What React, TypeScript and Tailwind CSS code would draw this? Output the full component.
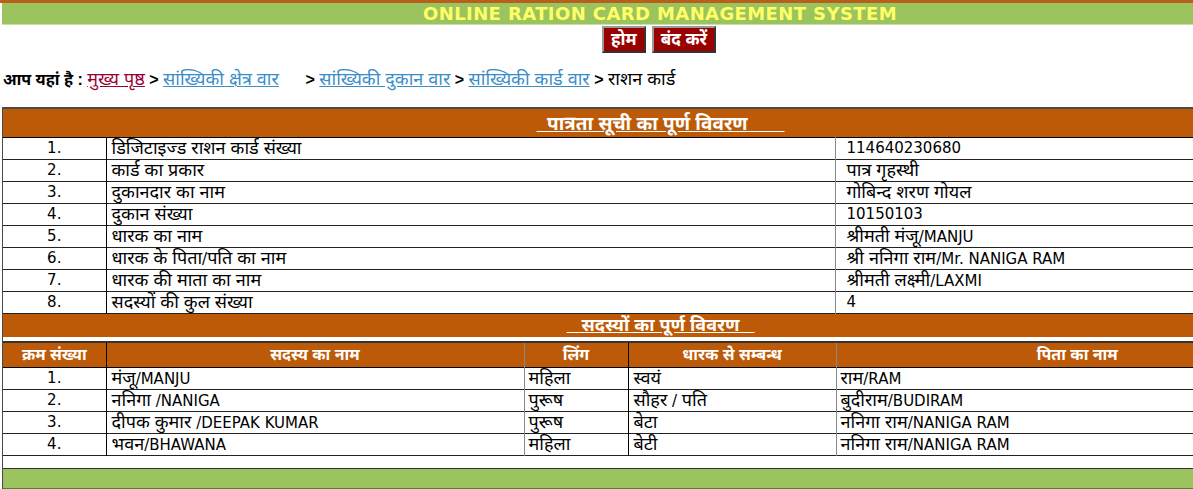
import React from 'react';

const details = [
  ['1.', 'डिजिटाइज्ड राशन कार्ड संख्या', '114640230680'],
  ['2.', 'कार्ड का प्रकार', 'पात्र गृहस्थी'],
  ['3.', 'दुकानदार का नाम', 'गोबिन्द शरण गोयल'],
  ['4.', 'दुकान संख्या', '10150103'],
  ['5.', 'धारक का नाम', 'श्रीमती मंजू/MANJU'],
  ['6.', 'धारक के पिता/पति का नाम', 'श्री ननिगा राम/Mr. NANIGA RAM'],
  ['7.', 'धारक की माता का नाम', 'श्रीमती लक्ष्मी/LAXMI'],
  ['8.', 'सदस्यों की कुल संख्या', '4'],
];

const members = [
  ['1.', 'मंजू/MANJU', 'महिला', 'स्वयं', 'राम/RAM'],
  ['2.', 'ननिगा /NANIGA', 'पुरूष', 'सौहर / पति', 'बुदीराम/BUDIRAM'],
  ['3.', 'दीपक कुमार /DEEPAK KUMAR', 'पुरूष', 'बेटा', 'ननिगा राम/NANIGA RAM'],
  ['4.', 'भवन/BHAWANA', 'महिला', 'बेटी', 'ननिगा राम/NANIGA RAM'],
];

const font = "font-['Liberation_Sans','Noto_Sans',sans-serif]";
const cellFont = "font-['DejaVu_Sans','Noto_Sans',sans-serif]";

// devanagari runs get a bigger size so they look like the Mangal text of the original
const deva = /([\u0900-\u097F](?:[\u0900-\u097F\s]*[\u0900-\u097F])?)/g;
function Mixed({ text }: { text: string }) {
  return (
    <>
      {text.split(deva).map((part, i) =>
        i % 2 === 1 ? (
          <span key={i} className={`text-[18px] leading-[16px] ${font}`}>{part}</span>
        ) : (
          <React.Fragment key={i}>{part}</React.Fragment>
        )
      )}
    </>
  );
}

const btn =
  'h-[27px] px-[7px] bg-[#990000] text-white font-bold text-[17px] border-2 border-t-[#9a9a9a] border-l-[#9a9a9a] border-r-[#333] border-b-[#333] leading-none';

export default function App() {
  return (
    <div className={`w-[1193px] h-[489px] overflow-hidden bg-white text-black ${font}`}>
      <div className="w-[1318px]">
        {/* header */}
        <div className="h-[3px] bg-[#b85f1c]" />
        <div className="ml-[2px] h-[22px] bg-[#9bc35e] border-b border-[#c9dfa8] flex items-center justify-center">
          <span className="text-[18px] leading-none font-bold text-[#ffff66] font-['DejaVu_Sans',sans-serif] tracking-[0.4px]">
            ONLINE RATION CARD MANAGEMENT SYSTEM
          </span>
        </div>
        <div className="flex justify-center gap-[6px] pt-[1px]">
          <button className={btn}>होम</button>
          <button className={btn}>बंद करें</button>
        </div>

        {/* breadcrumb */}
        <div className="pl-[3px] pt-[14px] h-[54px] text-[16px] leading-[24px] whitespace-pre">
          <b>आप यहां है : </b>
          <a href="#" className="text-[#990033] underline text-[18px]">मुख्य पृष्ठ</a>
          <b> &gt; </b>
          <a href="#" className="text-[#3b8dc8] underline text-[18px]">सांख्यिकी क्षेत्र वार</a>
          <b>{'\u00a0\u00a0\u00a0\u00a0\u00a0 > '}</b>
          <a href="#" className="text-[#3b8dc8] underline text-[18px]">सांख्यिकी दुकान वार</a>
          <b> &gt; </b>
          <a href="#" className="text-[#3b8dc8] underline text-[18px]">सांख्यिकी कार्ड वार</a>
          <b> &gt; </b>
          <span className="text-[18px]">राशन कार्ड</span>
        </div>

        {/* details */}
        <div className="ml-[2px] border-t-2 border-l border-[#4a4a4a]">
          <table className={`w-full border-collapse text-[15px] leading-[16px] ${cellFont}`}>
            <tbody>
              <tr className="bg-[#bd5a07] h-[28px] border-b border-black">
                <td colSpan={3} className={`text-center text-white font-bold text-[19px] pt-[2px] ${font}`}>
                  <span className="underline whitespace-pre">{'\u00a0 पात्रता सूची का पूर्ण विवरण \u00a0\u00a0\u00a0\u00a0\u00a0\u00a0'}</span>
                </td>
              </tr>
              {details.map((r) => (
                <tr key={r[0]} className="h-[22px] border-b border-[#222]">
                  <td className="w-[103px] text-center border-r border-black">{r[0]}</td>
                  <td className="w-[729px] pl-[5px] border-r border-[#888]"><Mixed text={r[1]} /></td>
                  <td className="pl-[11px]"><Mixed text={r[2]} /></td>
                </tr>
              ))}
              <tr className="bg-[#bd5a07] h-[24px]">
                <td colSpan={3} className={`text-center text-white font-bold text-[18px] ${font}`}>
                  <span className="underline whitespace-pre">{'\u00a0\u00a0 सदस्यों का पूर्ण विवरण \u00a0\u00a0'}</span>
                </td>
              </tr>
            </tbody>
          </table>

          {/* members */}
          <div className="mt-[4px] border-t-2 border-[#333]">
            <table className={`w-full border-collapse text-[15px] leading-[16px] ${cellFont}`}>
              <thead>
                <tr className={`bg-[#bd5a07] h-[24px] text-white font-bold text-[16px] border-b border-black ${font}`}>
                  <th className="w-[103px] border-r border-black">क्रम संख्या</th>
                  <th className="w-[418px] border-r border-[#888]">सदस्य का नाम</th>
                  <th className="w-[104px] border-r border-black">लिंग</th>
                  <th className="w-[208px] border-r border-[#888]">धारक से सम्बन्ध</th>
                  <th>पिता का नाम</th>
                </tr>
              </thead>
              <tbody>
                {members.map((m) => (
                  <tr key={m[0]} className="h-[22px] border-b border-[#222]">
                    <td className="text-center border-r border-black">{m[0]}</td>
                    <td className="pl-[5px] border-r border-[#888]"><Mixed text={m[1]} /></td>
                    <td className="pl-[4px] border-r border-black"><Mixed text={m[2]} /></td>
                    <td className="pl-[5px] border-r border-[#888]"><Mixed text={m[3]} /></td>
                    <td className="pl-[4px]"><Mixed text={m[4]} /></td>
                  </tr>
                ))}
              </tbody>
            </table>
          </div>
          <div className="h-[12px]" />
          <div className="h-[21px] bg-[#9bc35e] border-t border-[#333] border-b border-b-[#5d7a3a]" />
        </div>
      </div>
    </div>
  );
}
